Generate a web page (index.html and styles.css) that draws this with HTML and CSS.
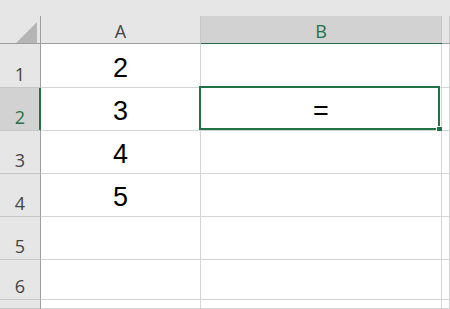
FILE: index.html
```html
<!DOCTYPE html>
<html lang="en">
<head>
    <meta charset="UTF-8">
    <title>Sheet</title>
    <link rel="stylesheet" href="styles.css">
</head>
<body>
    <div class="sheet">
        <div class="topbar"></div>
        <div class="grid">
            <div class="corner">
                <svg width="21" height="21" viewBox="0 0 21 21"><polygon points="0,21 21,21 21,0" fill="#b5b5b5"/></svg>
            </div>
            <div class="col-head">A</div>
            <div class="col-head selected">B</div>
            <div class="col-head"></div>

            <div class="row-head">1</div>
            <div class="cell">2</div>
            <div class="cell"></div>
            <div class="cell"></div>

            <div class="row-head selected">2</div>
            <div class="cell">3</div>
            <div class="cell active">=<span class="frame"><span class="handle"></span></span></div>
            <div class="cell"></div>

            <div class="row-head">3</div>
            <div class="cell">4</div>
            <div class="cell"></div>
            <div class="cell"></div>

            <div class="row-head">4</div>
            <div class="cell">5</div>
            <div class="cell"></div>
            <div class="cell"></div>

            <div class="row-head">5</div>
            <div class="cell"></div>
            <div class="cell"></div>
            <div class="cell"></div>

            <div class="row-head">6</div>
            <div class="cell"></div>
            <div class="cell"></div>
            <div class="cell"></div>

            <div class="row-head"></div>
            <div class="cell"></div>
            <div class="cell"></div>
            <div class="cell"></div>
        </div>
    </div>
</body>
</html>
```

FILE: styles.css
```css
body {
    margin: 0;
    background: #fff;
    font-family: "Open Sans", "Noto Sans", sans-serif;
}
.sheet {
    width: 450px;
    height: 309px;
    overflow: hidden;
    display: flex;
    flex-direction: column;
    background: #e6e6e6;
}
.topbar {
    height: 16px;
    flex: none;
}
.grid {
    flex: 1;
    display: grid;
    grid-template-columns: 41px 160px 241px 1fr;
    grid-template-rows: 28px 44px 43px 43px 43px 43px 40px 1fr;
}
.grid > div {
    box-sizing: border-box;
    position: relative;
}
.corner {
    border-right: 1px solid #9e9e9e;
    border-bottom: 1px solid #9e9e9e;
    padding: 6px 0 0 16px;
}
.corner svg {
    display: block;
}
.col-head {
    border-right: 1px solid #c6c6c6;
    border-bottom: 1px solid #9e9e9e;
    display: flex;
    align-items: flex-end;
    justify-content: center;
    padding-bottom: 3px;
    font-size: 18px;
    line-height: 1;
    color: #444;
}
.col-head.selected {
    background: #d2d2d2;
    color: #217346;
}
.col-head.selected::after {
    content: "";
    position: absolute;
    left: 0;
    right: -1px;
    bottom: -2px;
    height: 2px;
    background: #217346;
}
.row-head {
    border-right: 1px solid #9e9e9e;
    border-bottom: 1px solid #c6c6c6;
    display: flex;
    align-items: flex-end;
    justify-content: center;
    padding-bottom: 4px;
    font-size: 18px;
    line-height: 1;
    color: #444;
}
.row-head.selected {
    background: #d2d2d2;
    color: #217346;
    border-right-color: #217346;
    box-shadow: inset -1px 0 0 #217346;
}
.cell {
    background: #fff;
    border-right: 1px solid #d4d4d4;
    border-bottom: 1px solid #d4d4d4;
    display: flex;
    align-items: flex-end;
    justify-content: center;
    padding-bottom: 5px;
    font-family: "Liberation Sans", Arial, sans-serif;
    font-size: 27px;
    line-height: 1;
    color: #000;
}
.frame {
    position: absolute;
    top: -2px;
    left: -2px;
    right: 1px;
    bottom: 0;
    border: 2px solid #217346;
}
.handle {
    position: absolute;
    right: -4px;
    bottom: -4px;
    width: 5px;
    height: 5px;
    background: #217346;
    box-shadow: 0 0 0 1px #fff;
}
```
